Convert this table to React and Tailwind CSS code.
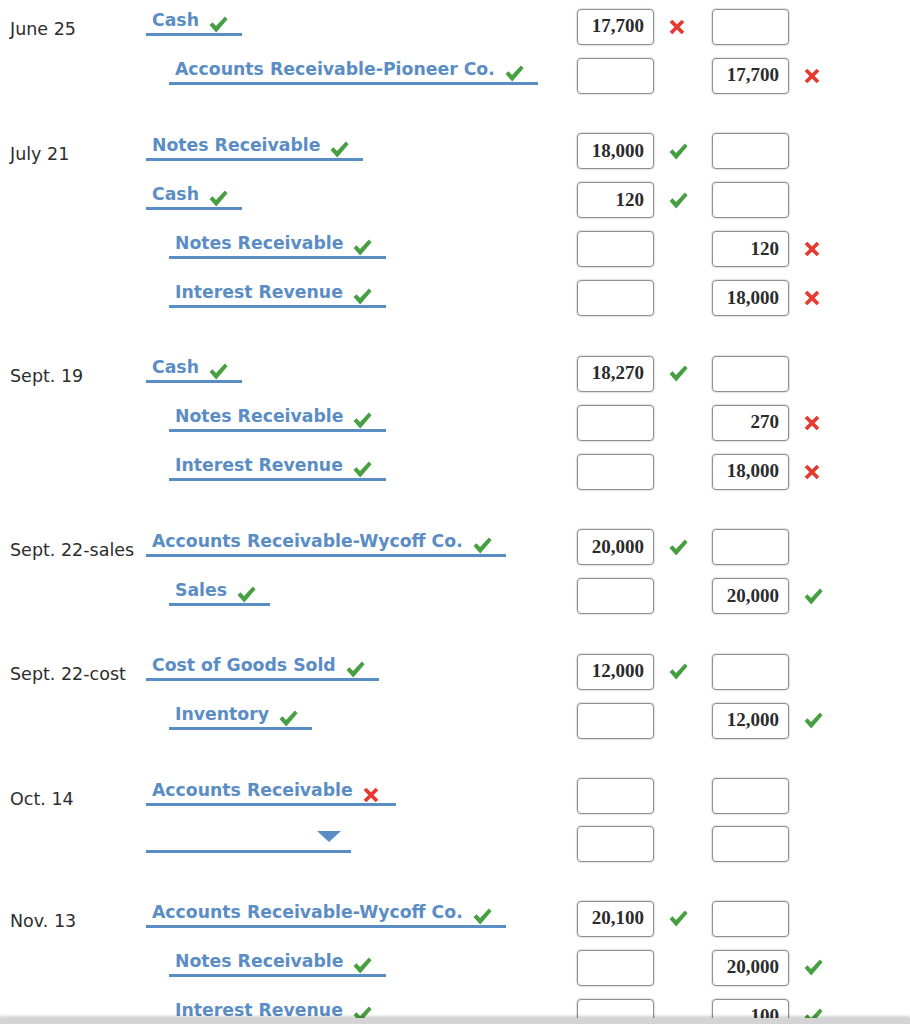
import React from "react"

/*******************************************************/
// Journal data
/*******************************************************/

const CHECK = "check"
const CROSS = "cross"

const ENTRIES = [
  {
    date: "June 25",
    lines: [
      { account: "Cash", mark: CHECK, dr: "17,700", drMark: CROSS },
      { account: "Accounts Receivable-Pioneer Co.", indent: true, mark: CHECK, cr: "17,700", crMark: CROSS },
    ],
  },
  {
    date: "July 21",
    lines: [
      { account: "Notes Receivable", mark: CHECK, dr: "18,000", drMark: CHECK },
      { account: "Cash", mark: CHECK, dr: "120", drMark: CHECK },
      { account: "Notes Receivable", indent: true, mark: CHECK, cr: "120", crMark: CROSS },
      { account: "Interest Revenue", indent: true, mark: CHECK, cr: "18,000", crMark: CROSS },
    ],
  },
  {
    date: "Sept. 19",
    lines: [
      { account: "Cash", mark: CHECK, dr: "18,270", drMark: CHECK },
      { account: "Notes Receivable", indent: true, mark: CHECK, cr: "270", crMark: CROSS },
      { account: "Interest Revenue", indent: true, mark: CHECK, cr: "18,000", crMark: CROSS },
    ],
  },
  {
    date: "Sept. 22-sales",
    lines: [
      { account: "Accounts Receivable-Wycoff Co.", mark: CHECK, dr: "20,000", drMark: CHECK },
      { account: "Sales", indent: true, mark: CHECK, cr: "20,000", crMark: CHECK },
    ],
  },
  {
    date: "Sept. 22-cost",
    lines: [
      { account: "Cost of Goods Sold", mark: CHECK, dr: "12,000", drMark: CHECK },
      { account: "Inventory", indent: true, mark: CHECK, cr: "12,000", crMark: CHECK },
    ],
  },
  {
    date: "Oct. 14",
    lines: [
      { account: "Accounts Receivable", mark: CROSS },
      { empty: true },
    ],
  },
  {
    date: "Nov. 13",
    lines: [
      { account: "Accounts Receivable-Wycoff Co.", mark: CHECK, dr: "20,100", drMark: CHECK },
      { account: "Notes Receivable", indent: true, mark: CHECK, cr: "20,000", crMark: CHECK },
      { account: "Interest Revenue", indent: true, mark: CHECK, cr: "100", crMark: CHECK },
    ],
  },
]

/*******************************************************/
// Marks
/*******************************************************/

const Check = () => (
  <svg width="19" height="17" viewBox="0 0 20 18" className="block">
    <path d="M0.5 9.5 L3.6 6.6 L7.4 10.6 L16.8 0.6 L19.6 3.4 L7.6 17.4 Z" fill="#46a041" />
  </svg>
)

const Cross = () => (
  <svg width="16" height="16" viewBox="0 0 16 16" className="block">
    <path d="M2 2 L14 14 M14 2 L2 14" stroke="#e8392f" strokeWidth="3.8" />
  </svg>
)

const Mark = ({ type }) => {
  if (type === CHECK) return <Check />
  if (type === CROSS) return <Cross />
  return null
}

/*******************************************************/
// Pieces
/*******************************************************/

const AmountBox = ({ value }) => (
  <div className="flex h-[36px] w-[77px] shrink-0 items-center justify-end rounded-[4px] border border-[#8f8f8f] bg-white pr-[9px] shadow-[0_0_1px_1px_rgba(0,0,0,0.12)]">
    <span className="font-['Liberation_Serif',serif] text-[19px] font-bold text-[#2b2b2b]">
      {value}
    </span>
  </div>
)

const Account = ({ line }) => {
  if (line.empty) {
    return (
      <div className="flex w-[205px] items-end justify-end border-b-[3px] border-[#5b8dc5] pb-[8px] pr-[10px]">
        <svg width="24" height="11" viewBox="0 0 24 11" className="block">
          <path d="M0 0 L24 0 L12 11 Z" fill="#5b8dc5" />
        </svg>
      </div>
    )
  }

  return (
    <div
      className={`flex items-end border-b-[3px] border-[#5b8dc5] pl-[6px] pr-[13px] ${
        line.indent ? "ml-[23px]" : ""
      }`}
    >
      <span className="pb-[3px] text-[17.3px] font-bold leading-[20px] text-[#5b8dc5]">
        {line.account}
      </span>
      <span className="ml-[10px] w-[20px]">
        <Mark type={line.mark} />
      </span>
    </div>
  )
}

const Row = ({ date, line, short }) => (
  <div className={`flex items-center ${short ? "h-[47px]" : "h-[49px]"}`}>
    <div className="w-[146px] shrink-0 self-stretch pl-[10px] pt-[17px] text-[17.5px] leading-[21px] text-[#2d2d2d]">
      {date}
    </div>
    <div className="flex w-[431px] shrink-0 items-end self-stretch pb-[15px]">
      <Account line={line} />
    </div>
    <AmountBox value={line.dr} />
    <div className="ml-[15px] w-[20px] shrink-0">
      <Mark type={line.drMark} />
    </div>
    <div className="ml-[23px]">
      <AmountBox value={line.cr} />
    </div>
    <div className="ml-[15px] w-[20px] shrink-0">
      <Mark type={line.crMark} />
    </div>
  </div>
)

/*******************************************************/
// Page
/*******************************************************/

const App = () => (
  <div className="min-h-screen bg-white pt-[2px] font-['DejaVu_Sans',sans-serif]">
    <div className="flex flex-col gap-[26.5px]">
      {ENTRIES.map(entry => (
        <div key={entry.date}>
          {entry.lines.map((line, i) => (
            <Row
              key={i}
              date={i === 0 ? entry.date : ""}
              line={line}
              short={line.empty}
            />
          ))}
        </div>
      ))}
    </div>
    {/* window edge at the bottom */}
    <div className="fixed inset-x-0 bottom-0 h-[6px] bg-[#d4d4d4] shadow-[0_-2px_3px_rgba(0,0,0,0.18)]" />
  </div>
)

export default App
